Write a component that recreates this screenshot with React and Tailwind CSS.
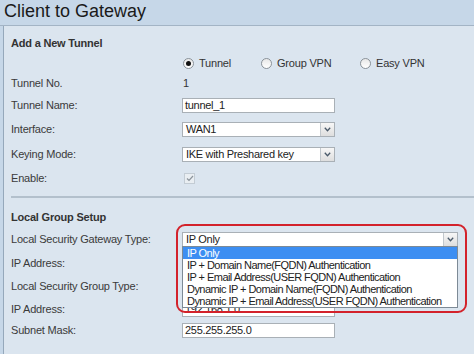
import React from "react";

const font = { fontFamily: '"Liberation Sans", Arial, sans-serif' };

const Chevron = () => (
  <svg width="7" height="5" viewBox="0 0 7 5">
    <path d="M0.8 0.8 L3.5 3.8 L6.2 0.8" fill="none" stroke="#4a5a6a" strokeWidth="1.3" />
  </svg>
);

const TextBox = ({ value, width = "w-[153px]" }) => (
  <div className={`${width} h-[15px] bg-white border border-[#a9b0b6] flex items-center px-[2px] text-[11px] tracking-[-0.3px] text-[#222] leading-none`}>
    {value}
  </div>
);

const SelectBox = ({ value, width = "w-[153px]" }) => (
  <div className={`${width} h-[15px] bg-white border border-[#a9b0b6] flex items-center text-[11px] tracking-[-0.3px] text-[#222] leading-none`}>
    <span className="flex-1 px-[3px]">{value}</span>
    <span className="w-[14px] h-[13px] border-l border-[#c2c8cd] bg-gradient-to-b from-[#f7f7f7] to-[#dedede] flex items-center justify-center">
      <Chevron />
    </span>
  </div>
);

const Radio = ({ checked }) => (
  <span className="w-[11px] h-[11px] rounded-full border border-[#8a9299] bg-gradient-to-b from-[#e8e8e8] to-white flex items-center justify-center">
    {checked && <span className="w-[5px] h-[5px] rounded-full bg-[#111]" />}
  </span>
);

const Row = ({ label, h, children }) => (
  <div className={`flex items-center ${h}`}>
    <div className="w-[171px] text-[11px] tracking-[-0.2px] text-[#3a3a3a]">{label}</div>
    <div className="flex items-center">{children}</div>
  </div>
);

const options = [
  "IP Only",
  "IP + Domain Name(FQDN) Authentication",
  "IP + Email Address(USER FQDN) Authentication",
  "Dynamic IP + Domain Name(FQDN) Authentication",
  "Dynamic IP + Email Address(USER FQDN) Authentication",
];

export default function App() {
  return (
    <div className="w-[474px] h-[354px] overflow-hidden bg-[#c6d7e8]" style={font}>
      {/* Page title */}
      <div className="h-[26px] border-b border-[#a3b4c5] pl-[4px]">
        <h1 className="text-[18px] leading-[22px] text-[#1a1a1a]">Client to Gateway</h1>
      </div>

      <div className="ml-[3px] h-[400px] border-l border-[#95a8bb] bg-[#dbe5ef] pl-[7px] pt-[7px]">
        {/* Add a New Tunnel */}
        <div className="h-[20px] flex items-center text-[11px] font-bold tracking-[-0.2px] text-[#333]">
          Add a New Tunnel
        </div>
        <div className="h-[20px] flex items-center pl-[172px] text-[11px] tracking-[-0.2px] text-[#333]">
          <label className="w-[78px] flex items-center gap-[5px]">
            <Radio checked />
            Tunnel
          </label>
          <label className="w-[99px] flex items-center gap-[5px]">
            <Radio />
            Group VPN
          </label>
          <label className="flex items-center gap-[5px]">
            <Radio />
            Easy VPN
          </label>
        </div>
        <Row label="Tunnel No." h="h-[21px]">
          <span className="pl-[1px] text-[11px] text-[#333]">1</span>
        </Row>
        <Row label="Tunnel Name:" h="h-[23px]">
          <TextBox value="tunnel_1" />
        </Row>
        <Row label="Interface:" h="h-[25px]">
          <SelectBox value="WAN1" />
        </Row>
        <Row label="Keying Mode:" h="h-[24px]">
          <SelectBox value="IKE with Preshared key" />
        </Row>
        <Row label="Enable:" h="h-[24px]">
          <span className="ml-[2px] w-[11px] h-[11px] border border-[#c3ccd4] bg-[#e9eef2] flex items-center justify-center">
            <svg width="8" height="7" viewBox="0 0 8 7">
              <path d="M1 3.5 L3 5.5 L7 1" fill="none" stroke="#8c949b" strokeWidth="1.2" />
            </svg>
          </span>
        </Row>

        <div className="mt-[6px] border-t-2 border-[#b3c0cc]" />

        {/* Local Group Setup */}
        <div className="mt-[9px] h-[20px] flex items-center text-[11px] font-bold tracking-[-0.2px] text-[#333]">
          Local Group Setup
        </div>
        <Row label="Local Security Gateway Type:" h="h-[24px]">
          <div className="relative z-10">
            <SelectBox value="IP Only" width="w-[276px]" />
            <div className="absolute left-0 top-[14px] w-[276px] bg-white border border-[#7d8a96] text-[11px] tracking-[-0.55px] text-[#222] leading-[12px]">
              {options.map((o, i) => (
                <div
                  key={o}
                  className={`h-[12px] px-[4px] whitespace-nowrap ${i === 0 ? "bg-[#3c8ef2] text-white" : ""}`}
                >
                  {o}
                </div>
              ))}
            </div>
            {/* Highlight ring */}
            <div className="absolute left-[-6px] top-[-8px] w-[291px] h-[89px] rounded-[9px] border-2 border-[#d3222b] pointer-events-none" />
          </div>
        </Row>
        <Row label="IP Address:" h="h-[24px]">
          <TextBox value="" />
        </Row>
        <Row label="Local Security Group Type:" h="h-[23px]">
          <SelectBox value="" />
        </Row>
        <Row label="IP Address:" h="h-[22px]">
          <TextBox value="192.168.1.0" />
        </Row>
        <Row label="Subnet Mask:" h="h-[20px]">
          <TextBox value="255.255.255.0" />
        </Row>
      </div>
    </div>
  );
}
